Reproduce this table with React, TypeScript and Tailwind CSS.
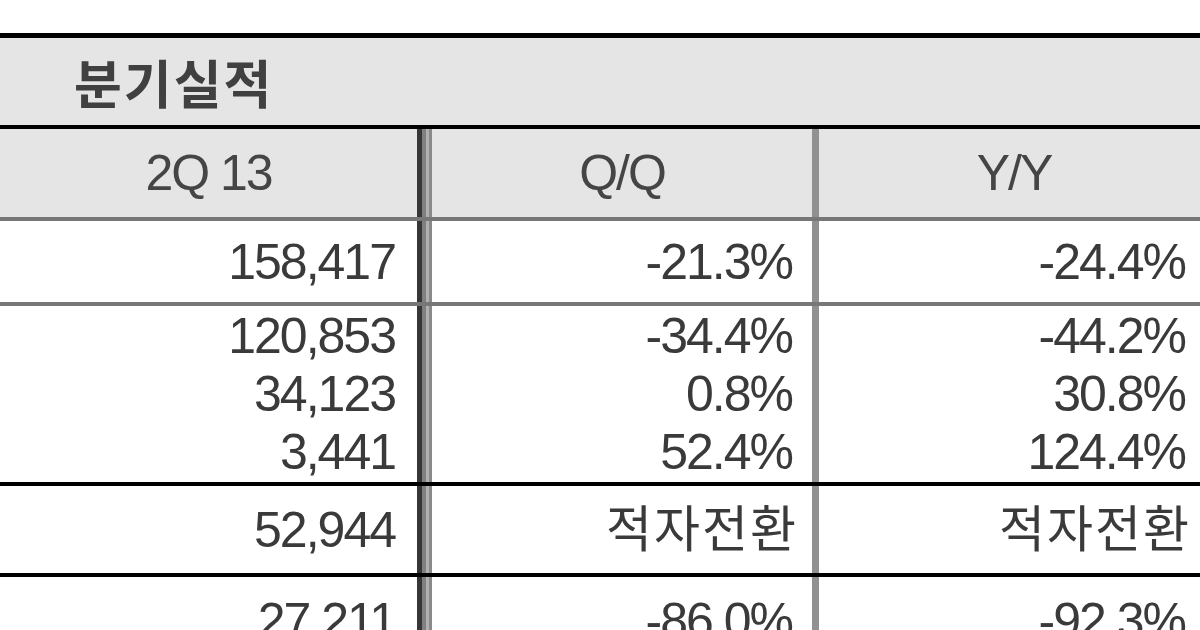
import React from "react";

type Row = { h: string; cells: [string[], string[], string[]] };

const rows: { line: "gray" | "black" | null; row: Row }[] = [
  { line: null, row: { h: "h-[81px]", cells: [["158,417"], ["-21.3%"], ["-24.4%"]] } },
  {
    line: "gray",
    row: {
      h: "h-[176px]",
      cells: [
        ["120,853", "34,123", "3,441"],
        ["-34.4%", "0.8%", "52.4%"],
        ["-44.2%", "30.8%", "124.4%"],
      ],
    },
  },
  { line: "black", row: { h: "h-[87px]", cells: [["52,944"], ["적자전환"], ["적자전환"]] } },
  { line: "black", row: { h: "h-[87px]", cells: [["27,211"], ["-86.0%"], ["-92.3%"]] } },
];

function Cell({ lines, w, pr }: { lines: string[]; w: string; pr: string }) {
  return (
    <div className={`${w} ${pr} flex flex-col justify-center items-end leading-[58px]`}>
      {lines.map((t) => (
        <span
          key={t}
          className={
            /[가-힣]/.test(t)
              ? "text-[50px] tracking-[2px] mr-[-6px]"
              : "text-[50px] tracking-[-2px]"
          }
        >
          {t}
        </span>
      ))}
    </div>
  );
}

function DoubleRule() {
  return (
    <div className="flex h-full shrink-0">
      <div className="w-[5px] bg-[#363636]" />
      <div className="w-[4px] bg-[#808080]" />
      <div className="w-[3px] bg-[#b0b0b0]" />
      <div className="w-[3px] bg-[#8a8a8a]" />
    </div>
  );
}

function SingleRule() {
  return <div className="w-[7px] h-full shrink-0 bg-[#919191]" />;
}

export default function App() {
  return (
    <div
      className="w-[1200px] h-[630px] overflow-hidden bg-white text-[#3a3a3a]"
      style={{ fontFamily: '"Liberation Sans", "Noto Sans CJK KR", sans-serif' }}
    >
      <div className="w-[1209px] flex flex-col">
        <div className="h-[33px]" />
        <div className="h-[5px] bg-black" />
        <div className="h-[87px] bg-[#e5e5e5] flex items-center pl-[74px]">
          <span
            className="text-[52px] tracking-[2px] font-semibold text-[#404040]"
            style={{ fontFamily: '"Noto Sans CJK KR", sans-serif' }}
          >
            분기실적
          </span>
        </div>
        <div className="h-[4px] bg-black" />

        {/* column header */}
        <div className="h-[88px] bg-[#e5e5e5] flex text-[50px] tracking-[-2px] text-[#454545]">
          <div className="w-[417px] flex items-center justify-center">2Q 13</div>
          <DoubleRule />
          <div className="w-[380px] flex items-center justify-center">Q/Q</div>
          <SingleRule />
          <div className="w-[390px] flex items-center justify-center">Y/Y</div>
        </div>
        <div className="h-[4px] bg-[#777777]" />

        {rows.map(({ line, row }, i) => (
          <React.Fragment key={i}>
            {line === "gray" && <div className="h-[4px] bg-[#777777]" />}
            {line === "black" && <div className="h-[4px] bg-black" />}
            <div className={`${row.h} flex`}>
              <Cell lines={row.cells[0]} w="w-[417px]" pr="pr-[22px]" />
              <DoubleRule />
              <Cell lines={row.cells[1]} w="w-[380px]" pr="pr-[20px]" />
              <SingleRule />
              <Cell lines={row.cells[2]} w="w-[390px]" pr="pr-[24px]" />
            </div>
          </React.Fragment>
        ))}
      </div>
    </div>
  );
}
